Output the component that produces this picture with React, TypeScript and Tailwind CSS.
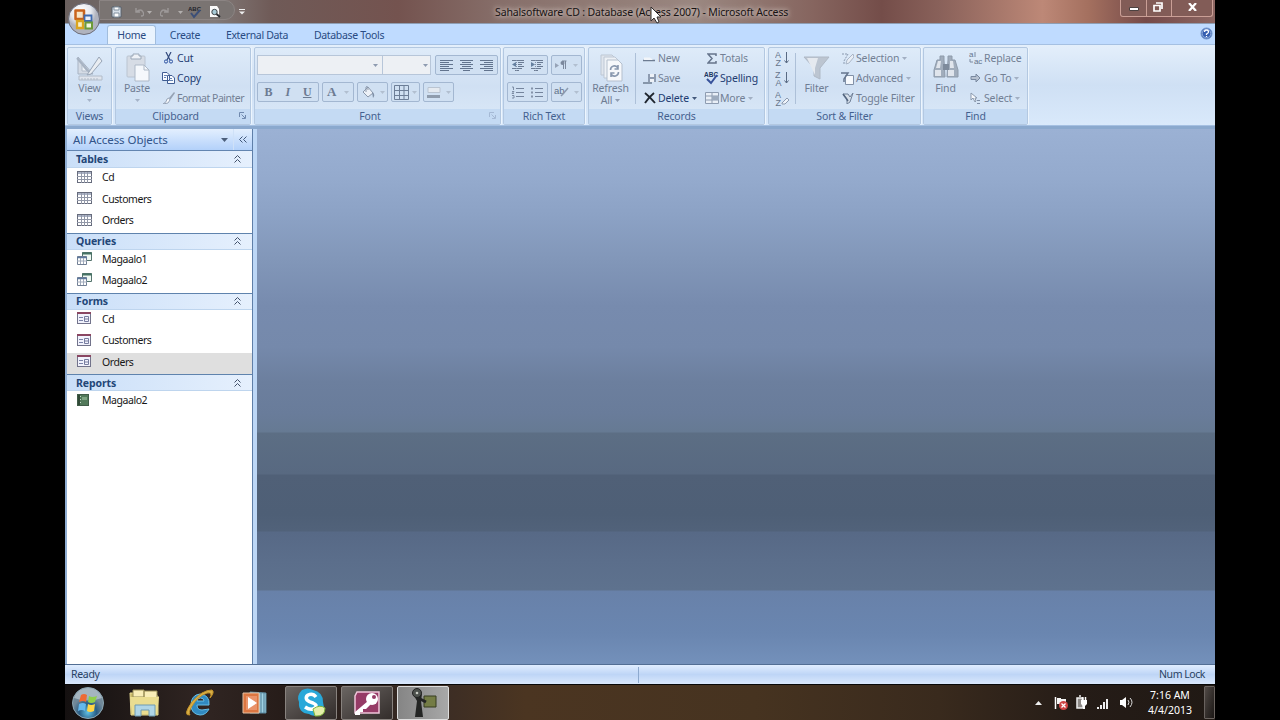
import type { ReactNode } from "react";

type Kids = { children?: ReactNode };

function Svg({ w, h, vb, cls = "", children }: Kids & { w: number; h: number; vb?: string; cls?: string }) {
  return (
    <svg width={w} height={h} viewBox={vb ?? `0 0 ${w} ${h}`} className={`shrink-0 ${cls}`} fill="none">
      {children}
    </svg>
  );
}

function Caret({ cls = "text-[#8e9bb0]" }: { cls?: string }) {
  return (
    <Svg w={5} h={3} cls={cls}>
      <path d="M0 0H5L2.5 3Z" fill="currentColor" />
    </Svg>
  );
}

function Group({ label, width, launcher, children }: Kids & { label: string; width: string; launcher?: string }) {
  return (
    <section className={`${width} flex h-[78px] shrink-0 flex-col rounded-[2px] border border-[#b3c8e1] bg-gradient-to-b from-[#deebf9] via-[#d0e0f3] to-[#dbe9f8] shadow-[1px_0_0_#edf5fd]`}>
      <div className="flex h-[61px] shrink-0">{children}</div>
      <div className="flex h-[15px] items-center bg-[#c4daf3] pb-[2px] text-[#44618f]">
        <span className="flex-1 text-center">{label}</span>
        {launcher && (
          <Svg w={7} h={7} cls={`mr-[4px] ml-[4px] ${launcher}`}>
            <path d="M.5 5V.5H5M2.5 2.5L6 6M6.5 3V6.5H3" stroke="currentColor" />
          </Svg>
        )}
      </div>
    </section>
  );
}

function Cmd({ icon, text, on, arrow, tight }: { icon: ReactNode; text: string; on?: boolean; arrow?: boolean; tight?: boolean }) {
  return (
    <div className={`flex h-5 items-center whitespace-nowrap ${on ? "text-[#1e3c72]" : "text-[#727f94]"}`}>
      <span className="flex w-[17px] shrink-0 justify-center">{icon}</span>
      <span className={`mr-[3px] ${tight ? "tracking-[-0.48px]" : ""}`}>{text}</span>
      {arrow && <Caret cls={on ? "text-[#44597c]" : "text-[#a2afc3]"} />}
    </div>
  );
}

function Big({ icon, width, lines, arrow }: { icon: ReactNode; width: string; lines: string[]; arrow?: boolean }) {
  return (
    <div className={`${width} flex flex-col items-center text-[#6f7d93]`}>
      <div className="flex h-[35px] shrink-0 items-center pt-1">{icon}</div>
      {lines.map((l, i) => (
        <span key={l} className="flex h-[11.5px] items-center gap-[3px] leading-[11px] whitespace-nowrap">
          {l}
          {arrow && i === 1 && <Caret />}
        </span>
      ))}
      {arrow && lines.length === 1 && <span className="mt-[4px]"><Caret cls="text-[#a5b3c8]" /></span>}
    </div>
  );
}

function Box({ width, children }: Kids & { width: string }) {
  return <div className={`${width} flex h-[20px] items-center justify-around rounded-[2px] border border-[#a3b7d1] bg-[#d0e0f2] text-[#6c7b92]`}>{children}</div>;
}

function Align({ kind }: { kind: "l" | "c" | "r" }) {
  const d = { l: "M0 1.5H13M0 3.5H9M0 5.5H13M0 7.5H9M0 9.5H13M0 11.5H9", c: "M0 1.5H13M2 3.5H11M0 5.5H13M2 7.5H11M0 9.5H13M3 11.5H10", r: "M0 1.5H13M4 3.5H13M0 5.5H13M4 7.5H13M0 9.5H13M4 11.5H13" }[kind];
  return <Svg w={13} h={13}><path d={d} stroke="#62748e" /></Svg>;
}

function Indent({ out }: { out?: boolean }) {
  return (
    <Svg w={14} h={12}>
      <path d="M1 1.5H13M7 3.5H13M7 5.5H11M7 7.5H13M1 9.5H11M4 11.5H8" stroke="#6b7b93" />
      <path d={out ? "M5 3L1 5.5L5 8Z" : "M1 3L5 5.5L1 8Z"} fill="#66809f" />
      <path d="M5.5 1V12" stroke="#8492a8" strokeDasharray="1 1" />
    </Svg>
  );
}

function List({ num }: { num?: boolean }) {
  return (
    <Svg w={14} h={13}>
      <path d="M5 2.5H13M5 6.5H13M5 10.5H13" stroke="#75849c" />
      {num ? <path d="M1 1H2.5V4M1 5.5H3L1 7.5H3M1 9.5H3V12H1" stroke="#75849c" strokeWidth=".9" /> : <path d="M1 1.5H3V3.5H1ZM1 5.5H3V7.5H1ZM1 9.5H3V11.5H1Z" fill="#8492a8" />}
    </Svg>
  );
}

function Sort({ a, b, erase }: { a: string; b: string; erase?: boolean }) {
  return (
    <Svg w={15} h={17}>
      <text x="0" y="8" fontSize="9" fill="#66758c" fontFamily="Liberation Sans, sans-serif">{a}</text>
      <text x="0.5" y="15.5" fontSize="9" fill="#66758c" fontFamily="Liberation Sans, sans-serif">{b}</text>
      {erase ? <path d="M7 13L12 8L14 10L10 14H7Z" fill="#eef3fa" stroke="#8d9bb0" /> : <path d="M11.5 2V13M9.5 10.5L11.5 13L13.5 10.5" stroke="#596a83" />}
    </Svg>
  );
}

function Ribbon() {
  return (
    <div className="flex h-[82px] shrink-0 gap-[3px] border-y border-[#a5c0e2] bg-gradient-to-b from-[#e4effb] via-[#cfe0f4] to-[#d9e9fb] pt-[2px] pl-[2px] tracking-[-0.15px]">
      <Group label="Views" width="w-[45px]">
        <Big width="w-full" lines={["View"]} arrow icon={
          <Svg w={28} h={27}>
            <path d="M2 3V20L17 20Z" fill="#d4dbe5" stroke="#a7b3c3" />
            <path d="M6 11V17H11Z" fill="#edf2f8" stroke="#b2bcc9" />
            <path d="M1 4L13 18" stroke="#a7b3c3" strokeWidth="2" />
            <path d="M13 18L11 21L15 20L26 7L23 3Z" fill="#e9edf2" stroke="#98a5b6" />
            <path d="M3 22H26V26H3Z" fill="#e0e5ed" stroke="#b2bcc9" />
            <path d="M6 24V26M9 24V26M12 24V26M15 24V26M18 24V26M21 24V26" stroke="#b2bcc9" />
          </Svg>
        } />
      </Group>
      <Group label="Clipboard" width="w-[136px]" launcher="text-[#7089ae]">
        <Big width="w-[42px]" lines={["Paste"]} arrow icon={
          <Svg w={25} h={29} cls="ml-[2px]">
            <rect x="1" y="3" width="18" height="21" rx="1" fill="#d6dce5" stroke="#bac4d1" />
            <path d="M5 3H7V1H13V3H15V6H5Z" fill="#eef2f7" stroke="#9ba8b8" />
            <path d="M9 12H18L23 17V28H9Z" fill="#f5f8fc" stroke="#aeb9c7" />
            <path d="M18 12V17H23" stroke="#aeb9c7" />
          </Svg>
        } />
        <div className="ml-[2px] w-[88px] shrink-0">
          <Cmd on text="Cut" icon={<Svg w={9} h={12}><path d="M2 0L6 8M7 0L3 8" stroke="#31497c" strokeWidth="1.2" /><circle cx="2" cy="9.5" r="1.6" stroke="#284f9f" /><circle cx="7" cy="9.5" r="1.6" stroke="#284f9f" /></Svg>} />
          <Cmd on text="Copy" icon={<Svg w={13} h={12}><path d="M.5.5H5L7.5 3V8.5H.5ZM5.5 3.5H10L12.5 6V11.5H5.5Z" fill="#f7faff" stroke="#405d93" /><path d="M2 3.5H5M2 5.5H4M7 6.5H10M7 8.5H11" stroke="#6382b1" /></Svg>} />
          <Cmd tight text="Format Painter" icon={<Svg w={12} h={12}><path d="M11 0L6 6L7.5 7.5L12 1Z" fill="#95a2b4" /><path d="M6 6L7 8L5 11L0 12Q4 10 4 7Z" fill="#f7f9fc" stroke="#98a5b8" /></Svg>} />
        </div>
      </Group>
      <Group label="Font" width="w-[247px]" launcher="text-[#a5b9d5]">
        <div className="flex flex-col gap-[7px] pt-[7px] pl-[2px]">
          <div className="flex h-5 items-center gap-[4px]">
            <div className="flex h-5 border border-[#b7c6d9] bg-[#edf0f4]">
              <div className="flex w-[125px] items-center justify-end border-r border-[#b7c6d9] pr-[4px]"><Caret /></div>
              <div className="flex w-[47px] items-center justify-end pr-[2px]"><Caret /></div>
            </div>
            <Box width="w-[63px]"><Align kind="l" /><Align kind="c" /><Align kind="r" /></Box>
          </div>
          <div className="flex gap-[3px] font-['Liberation_Serif',serif] text-[12px]">
            <Box width="w-[62px]"><b>B</b><i className="font-bold">I</i><b className="underline">U</b></Box>
            <Box width="w-[32px]"><b className="text-[13px]">A</b><Caret cls="text-[#b2bfd0]" /></Box>
            <Box width="w-[31px]"><Svg w={14} h={13}><path d="M2 6L7 1L12 7L7 11Z" fill="#edf1f7" stroke="#8b98ab" /><path d="M5 6V1Q7-1 7 4" stroke="#8b98ab" /><path d="M11 6Q15 8 12 12Z" fill="#8090a7" /></Svg><Caret cls="text-[#b2bfd0]" /></Box>
            <Box width="w-[29px]"><Svg w={15} h={15}><path d="M.5.5H14.5V14.5H.5ZM5.5 0V15M10 0V15M0 5.5H15M0 10.5H15" stroke="#6d7e97" /></Svg><Caret cls="text-[#b2bfd0]" /></Box>
            <Box width="w-[31px]"><Svg w={15} h={13}><path d="M2 1.5H14V6.5H2Z" fill="#e5eaf0" stroke="#bac4d1" /><path d="M1 10.500H14" stroke="#8f9cad" strokeWidth="3" /></Svg><Caret cls="text-[#b2bfd0]" /></Box>
          </div>
        </div>
      </Group>
      <Group label="Rich Text" width="w-[82px] -ml-[1px]">
        <div className="flex flex-col gap-[7px] pt-[7px] pl-[3px]">
          <div className="flex gap-[3px]">
            <Box width="w-[41px]"><Indent out /><Indent /></Box>
            <Box width="w-[31px]"><Svg w={13} h={10}><path d="M0 3L4 5.5L0 8Z" fill="#96a3b7" /><path d="M8.5 9V1M10.500 9V1M11.500 1H7" stroke="#7b889d" /><circle cx="7.5" cy="3" r="2" fill="#7b889d" /></Svg><Caret cls="text-[#b2bfd0]" /></Box>
          </div>
          <div className="flex gap-[3px]">
            <Box width="w-[41px]"><List num /><List /></Box>
            <Box width="w-[31px]"><Svg w={16} h={14}><text x="0" y="9" fontSize="9.5" fill="#5f7089" fontFamily="Liberation Sans, sans-serif">ab</text><path d="M14 3L9 9L7 11" stroke="#8c9aaf" strokeWidth="1.5" /></Svg><Caret cls="text-[#b2bfd0]" /></Box>
          </div>
        </div>
      </Group>
      <Group label="Records" width="w-[177px]">
        <Big width="w-[43px]" lines={["Refresh", "All"]} arrow icon={
          <Svg w={24} h={28} cls="ml-[3px]">
            <path d="M1 1H12L16 5V21H1Z" fill="#dfe5ed" stroke="#bdc7d4" />
            <path d="M4 3H15L19 7V24H4Z" fill="#edf1f6" stroke="#bdc7d4" />
            <path d="M7 6H18L22 10V27H7Z" fill="#f6f8fb" stroke="#b4bfcd" />
            <path d="M10.5 16A4 4 0 0 1 18 14M18.5 18A4 4 0 0 1 11 20M18 11V15H14.5M11 23V19H14.5" stroke="#8998af" strokeWidth="1.6" />
          </Svg>
        } />
        <div className="my-[5px] ml-[3px] w-px bg-[#adc0d8]" />
        <div className="ml-[5px] w-[62px]">
          <Cmd text="New" icon={<Svg w={13} h={8}><path d="M0 6.5H12" stroke="#6d7c92" strokeWidth="1.5" /><path d="M1 3.5H7L10 6H1Z" fill="#f2f5f9" /></Svg>} />
          <Cmd text="Save" icon={<Svg w={14} h={11}><path d="M5 1H13V9H5Z" fill="#8e9cb1" /><path d="M7 1H11V4H7ZM7 6H11V9H7Z" fill="#edf1f7" /><path d="M0 10H9" stroke="#6d7c92" strokeWidth="1.5" /></Svg>} />
          <Cmd on text="Delete" arrow icon={<Svg w={12} h={12}><path d="M1 1Q6 5 11 11M10 1Q5 5 1 11" stroke="#20262f" strokeWidth="1.9" /></Svg>} />
        </div>
        <div>
          <Cmd text="Totals" icon={<Svg w={10} h={11}><path d="M9 3V1H1L5 5.5L1 10H9V8" stroke="#65748b" strokeWidth="1.5" /></Svg>} />
          <Cmd on text="Spelling" icon={<Svg w={15} h={14}><text x="0" y="6" fontSize="6.5" fontWeight="700" fill="#20355f" fontFamily="Liberation Sans, sans-serif" textLength="14">ABC</text><path d="M3 8L7 12L13 4" stroke="#37529a" strokeWidth="2" /></Svg>} />
          <Cmd text="More" arrow icon={<Svg w={14} h={12}><path d="M.5.5H13.5V11.5H.5ZM0 4H14M0 8H14M7 0V12" fill="#e9eff7" stroke="#8e9cb1" /><path d="M7 4H14V8H7Z" fill="#9dabbe" /></Svg>} />
        </div>
      </Group>
      <Group label="Sort & Filter" width="w-[153px]">
        <div className="flex w-[26px] flex-col items-center gap-[3px] pt-[2px]">
          <Sort a="A" b="Z" /><Sort a="Z" b="A" /><Sort a="A" b="Z" erase />
        </div>
        <div className="my-[5px] w-px bg-[#adc0d8]" />
        <Big width="w-[41px]" lines={["Filter"]} icon={
          <Svg w={27} h={26}>
            <path d="M1 2H26L17 13V24L11 21V13Z" fill="#bcc5d1" stroke="#afb9c6" />
            <path d="M4 3H15L12 13V20Z" fill="#e5e9ef" />
          </Svg>
        } />
        <div className="ml-[2px]">
          <Cmd text="Selection" arrow icon={<Svg w={13} h={13}><path d="M1 2H7L3 9V12" stroke="#8998ae" strokeDasharray="2 1" /><path d="M12 2L6 8L5 12L8 11L13 5Z" fill="#e9eef5" stroke="#aab6c7" /></Svg>} />
          <Cmd text="Advanced" arrow icon={<Svg w={13} h={13}><path d="M4.5 3.5H12.5V12.5H4.5Z" fill="#f6f9fd" stroke="#8190a7" /><path d="M0 1H7L3 7V10" stroke="#66768e" strokeWidth="1.5" /></Svg>} />
          <Cmd text="Toggle Filter" icon={<Svg w={12} h={12}><path d="M1 2H6L8 5L11 1L8 10L5 12V7Z" fill="#d5dee9" stroke="#718198" /><path d="M1 2L6 9" stroke="#53657f" strokeWidth="1.5" /></Svg>} />
        </div>
      </Group>
      <Group label="Find" width="w-[105px] -ml-[1px]">
        <Big width="w-[43px]" lines={["Find"]} icon={
          <Svg w={26} h={25}>
            <path d="M4 5H7V1H11V5L12 22H1V15Z" fill="#a1adbc" stroke="#8e9bab" />
            <path d="M15 5V1H19V5H22L25 15V22H14Z" fill="#a1adbc" stroke="#8e9bab" />
            <path d="M10 9H16V15H10Z" fill="#7e8b9c" />
            <path d="M2 15H8V21H2ZM15 15H21V21H15ZM5 6H8L7 13H3ZM17 6H20L21 13H17Z" fill="#e0e5ec" />
          </Svg>
        } />
        <div>
          <Cmd text="Replace" icon={<Svg w={14} h={14}><text x="0" y="6" fontSize="8" fill="#65748b" fontFamily="Liberation Sans, sans-serif">a</text><text x="5" y="13" fontSize="8" fill="#65748b" fontFamily="Liberation Sans, sans-serif">ac</text><path d="M6 1V6M1 8V11H4" stroke="#7c8aa0" /></Svg>} />
          <Cmd text="Go To" arrow icon={<Svg w={11} h={8}><path d="M1 2.5H6V0L10 4L6 8V5.5H1Z" fill="#b6c1d0" stroke="#78889f" /></Svg>} />
          <Cmd text="Select" arrow icon={<Svg w={11} h={12}><path d="M1 1V8L3 6L5 10L6 9L5 6H7Z" fill="#f7f9fc" stroke="#8b99ad" /><path d="M7 8.5H10M7 11.5H10" stroke="#7f8fa7" /></Svg>} />
        </div>
      </Group>
    </div>
  );
}

type Kind = "table" | "query" | "form" | "report";
const nav: { title: string; kind: Kind; items: string[] }[] = [
  { title: "Tables", kind: "table", items: ["Cd", "Customers", "Orders"] },
  { title: "Queries", kind: "query", items: ["Magaalo1", "Magaalo2"] },
  { title: "Forms", kind: "form", items: ["Cd", "Customers", "Orders"] },
  { title: "Reports", kind: "report", items: ["Magaalo2"] },
];

function ObjIcon({ kind }: { kind: Kind }) {
  if (kind === "table") return <Svg w={15} h={12}><rect x=".5" y=".5" width="14" height="11" fill="#fff" stroke="#676c7d" /><path d="M1 2H14" stroke="#aab2c5" strokeWidth="2" /><path d="M0 5.5H15M0 8.5H15M4.5 1V12M7.5 1V12M10.5 1V12" stroke="#9298a8" /></Svg>;
  if (kind === "query") return <Svg w={15} h={13}><path d="M5.5.5H14.5V8.5H5.5Z" fill="#eef7f2" stroke="#54736d" /><path d="M5 1.5H15" stroke="#467365" strokeWidth="2" /><path d="M.5 4.5H9.5V12.5H.5Z" fill="#fff" stroke="#717f94" /><path d="M0 5.5H10" stroke="#5f799d" strokeWidth="1.5" /><path d="M3.5 6V12M6.5 6V12M0 9H10" stroke="#a1abbc" /></Svg>;
  if (kind === "form") return <Svg w={14} h={12}><rect x=".5" y=".5" width="13" height="11" fill="#f1f2fc" stroke="#72738b" /><path d="M0 1H14" stroke="#8a4662" strokeWidth="2" /><path d="M2 5.5H6M2 8.5H6" stroke="#7b83a9" /><path d="M7.5 4.5H11.5V9.5H7.5ZM7 7H12" stroke="#777d9f" /></Svg>;
  return <Svg w={12} h={12}><rect x=".5" y=".5" width="11" height="11" fill="#52795a" stroke="#405c48" /><path d="M2 1V11" stroke="#304936" strokeWidth="2" /><path d="M5 3H10V6H5Z" fill="#7ea483" /><path d="M3 2.5H4M3 5.5H4M3 8.5H4" stroke="#c3d8c4" /></Svg>;
}

function Navigation() {
  return (
    <aside className="flex w-[188px] shrink-0 flex-col border-r border-l-2 border-r-[#5f7fa8] border-l-[#8fadd2] bg-white">
      <div className="flex h-[22px] items-center border-b border-[#6385b0] bg-gradient-to-b from-[#e3effe] to-[#b3d1fa] pl-[6px] text-[11.5px] tracking-[-0.06px] text-[#31548a]">
        <span className="flex-1">All Access Objects</span>
        <Svg w={7} h={4} cls="mr-[5px]"><path d="M0 0H7L3.5 4Z" fill="#4c5f7b" /></Svg>
        <div className="flex h-full w-[19px] items-center justify-center border-l border-[#cfe1f8]">
          <Svg w={8} h={7}><path d="M3.5.5L.5 3.5L3.5 6.5M7.5.5L4.5 3.5L7.5 6.5" stroke="#405779" /></Svg>
        </div>
      </div>
      {nav.map((g, gi) => (
        <section key={g.title}>
          <div className={`flex h-[17px] items-center justify-between border-b border-b-[#bed5ee] bg-gradient-to-r from-[#cadff8] to-[#e6f0fd] pr-[11px] pl-[9px] text-[10.5px] font-bold tracking-[-0.1px] text-[#234677] ${gi ? "border-t border-t-[#5f83ad]" : ""}`}>
            {g.title}
            <Svg w={7} h={8}><path d="M.5 3.5L3.5.5L6.5 3.5M.5 7.5L3.5 4.5L6.5 7.5" stroke="#42516a" /></Svg>
          </div>
          {g.items.map((t, i) => (
            <div key={t} className={`flex h-[21.5px] items-center pb-[3px] text-[10.5px] tracking-[-0.45px] text-[#171717] ${g.kind === "form" && i === 2 ? "bg-[#dfdfdf]" : ""}`}>
              <span className="ml-[10px] flex w-[25px] pb-[1px]"><ObjIcon kind={g.kind} /></span>
              {t}
            </div>
          ))}
        </section>
      ))}
    </aside>
  );
}

function OfficeOrb() {
  return (
    <Svg w={34} h={34} cls="absolute top-[2px] left-[2px] z-10">
      <defs><radialGradient id="orb" cx=".4" cy=".25"><stop stopColor="#fff" /><stop offset=".65" stopColor="#e8eaef" /><stop offset="1" stopColor="#b0b3be" /></radialGradient></defs>
      <circle cx="17" cy="17" r="15.5" fill="url(#orb)" stroke="#6d6e7b" />
      <path d="M8.5 8.5H17V17H8.5Z" fill="#f8e5c6" stroke="#c9641d" strokeWidth="2.5" strokeLinejoin="round" />
      <path d="M17.500 13.500H24.500V19H17.500Z" fill="#e9eff9" stroke="#3f6bb0" strokeWidth="1.800" />
      <path d="M10 19H16V26H10Z" fill="#faf0c6" stroke="#dba51f" strokeWidth="2.300" />
      <path d="M18.500 20.500H25V26.500H18.500Z" fill="#eff6df" stroke="#6c9b38" strokeWidth="2" />
    </Svg>
  );
}

function TitleBar() {
  return (
    <header className="relative flex h-[23px] shrink-0 items-start bg-[linear-gradient(90deg,#6a605e_0%,#817977_13%,#6f5a57_18%,#74534f_29%,#876f6a_38%,#9a8780_55%,#86655f_65%,#744d49_71%,#89615a_76%,#bd8877_85%,#a4705f_89%,#754a49_94%,#8c6662_100%)]">
      <OfficeOrb />
      <div className="ml-[34px] flex h-[20px] w-[136px] items-center rounded-r-[10px] border border-[#8b8483] bg-[#7a7472] pt-[4px] pl-[11px]">
        <Svg w={11} h={12}><path d="M1 1H10V11H1Z" fill="#d7e0e9" stroke="#56616c" /><path d="M3 1H8V4H3ZM3 7H8V11H3Z" fill="#fff" stroke="#81909e" /></Svg>
        <Svg w={10} h={9} cls="ml-[12px]"><path d="M2 4Q7 0 9 4T7 8M2 0V4H6" stroke="#9d9999" strokeWidth="1.4" /></Svg>
        <span className="ml-[3px]"><Caret cls="text-[#b2afae]" /></span>
        <Svg w={10} h={9} cls="ml-[8px]"><path d="M8 4Q3 0 1 4T3 8M8 0V4H4" stroke="#9d9999" strokeWidth="1.4" /></Svg>
        <span className="ml-[8px]"><Caret cls="text-[#b2afae]" /></span>
        <Svg w={14} h={13} cls="ml-[5px]"><text x="0" y="5" fontSize="6" fontWeight="700" fill="#20232b" fontFamily="Liberation Sans, sans-serif" textLength="13">ABC</text><path d="M3 7L6 11L12 4" stroke="#3c4f78" strokeWidth="2" /></Svg>
        <Svg w={12} h={12} cls="ml-[7px]"><path d="M1 0H8L10 3V11H1Z" fill="#fafafa" /><circle cx="5.5" cy="6" r="2.7" fill="#a7cad6" stroke="#41474c" /><path d="M7.5 8L11 11" stroke="#292d31" strokeWidth="2" /></Svg>
      </div>
      <Svg w={6} h={6} cls="mt-[9px] ml-[4px]"><path d="M0 .5H6" stroke="#eee" /><path d="M0 2.5H6L3 5.5Z" fill="#eee" /></Svg>
      <h1 className="absolute top-[4px] left-[430px] h-[16px] text-[10.5px] leading-[16px] tracking-[-0.13px] whitespace-nowrap text-[#181313] [text-shadow:0_0_4px_#d5c8c3,0_0_6px_#d5c8c3]">Sahalsoftware CD : Database (Access 2007) - Microsoft Access</h1>
      <Svg w={12} h={18} cls="absolute top-[6px] left-[585px]"><path d="M1 1V15L4 12L7 17L9 16L7 11H11Z" fill="#fff" stroke="#302c2c" /></Svg>
      <div className="mr-[2px] ml-auto flex h-[17px] w-[93px] rounded-b-[3px] border border-t-0 border-[#ca9f96] bg-[#825c57] pb-[2px]">
        <div className="-mb-[2px] flex w-[26px] items-center justify-center border-r border-[#ca9f96]"><Svg w={10} h={4} cls="mt-[2px]"><path d="M.5.5H9.5V3.5H.5Z" fill="#fff" stroke="#4c4140" /></Svg></div>
        <div className="-mb-[2px] flex w-[25px] items-center justify-center border-r border-[#ca9f96] pr-[3px] pb-[3px]"><Svg w={10} h={10}><path d="M3 1H9V7M1 3.5H7V9H1Z" stroke="#fff" strokeWidth="1.7" /></Svg></div>
        <div className="flex flex-1 items-center justify-center"><Svg w={9} h={8}><path d="M1 0L8 8M8 0L1 8" stroke="#fff" strokeWidth="2.2" /></Svg></div>
      </div>
    </header>
  );
}

function TaskButton({ active, children }: Kids & { active?: boolean }) {
  return <div className={`flex h-[34px] w-[52px] items-center justify-center rounded-[2px] border ${active ? "border-[#dedede] bg-gradient-to-r from-[#858585] to-[#a8a8a8]" : "border-[#88827e] bg-gradient-to-br from-[#6a6562] to-[#332d2b]"}`}>{children}</div>;
}

function TaskBar() {
  return (
    <footer className="flex h-[36px] shrink-0 items-center border-t border-[#080808] bg-[linear-gradient(90deg,#141010_0%,#302522_12%,#251b18_20%,#3a2c25_32%,#4b3521_40%,#463320_60%,#392a1d_76%,#251c17_88%,#201914_100%)]">
      <Svg w={34} h={34} cls="ml-[6px]">
        <defs><radialGradient id="start" cx=".5" cy=".8"><stop stopColor="#62c3e6" /><stop offset=".55" stopColor="#295e86" /><stop offset="1" stopColor="#718898" /></radialGradient></defs>
        <circle cx="17" cy="17" r="15.5" fill="url(#start)" stroke="#8ba5b1" />
        <path d="M3 12Q7 2 17 2T31 12Q17 17 3 12Z" fill="#e4edf2" opacity=".45" />
        <path d="M10 9Q13 7 16 9L15 16Q12 14 8 16Z" fill="#ee6a35" /><path d="M18 10Q21 12 26 10L24 16Q20 18 17 16Z" fill="#8fcf4a" /><path d="M8 18Q12 16 15 18L14 25Q11 23 7 25Z" fill="#64b9ee" /><path d="M17 18Q20 20 24 18L23 25Q19 27 16 25Z" fill="#ffd545" />
      </Svg>
      <Svg w={31} h={29} cls="ml-[24px]"><path d="M1 5H10L12 8H29V27H2Z" fill="#c9b966" stroke="#e9dc93" /><path d="M4 2H15V9H4ZM15 3H28V10H15Z" fill="#f8edb7" stroke="#978c55" /><path d="M1 9H30L28 26H3Z" fill="#eadd90" /><path d="M6 28V17H26V28H20V22H12V28Z" fill="#afd5e6" stroke="#6e9bb2" /></Svg>
      <Svg w={30} h={30} cls="ml-[25px]"><path fillRule="evenodd" d="M24 17H12Q12 22 17 22L24 21Q21 27 15 27Q6 26 6 17Q6 7 15 6Q25 7 24 17ZM12 13H19Q19 10 15.5 10T12 13Z" fill="#318ac1" stroke="#67bde5" /><path d="M5 27Q-3 28 7 14Q17 2 27 2Q30 4 25 10Q28 4 22 5Q13 8 7 18Q3 25 5 27Z" fill="#d9b046" stroke="#c39128" /></Svg>
      <Svg w={26} h={25} cls="ml-[27px]"><path d="M8 2L24 3V23H8Z" fill="#9fd0e1" stroke="#5b8ba2" /><path d="M19 3V23M22 3V23" stroke="#4e7d94" /><path d="M1 3H17V23H1Z" fill="#dc7641" stroke="#e4c0a2" /><path d="M4 6H15V20H4Z" fill="#e9936a" /><path d="M6 7L15 13L6 19Z" fill="#fff" /></Svg>
      <div className="ml-[17px] flex gap-[4px]">
        <TaskButton><Svg w={32} h={31}><path d="M7 3Q13 0 18 3Q28 5 28 15Q31 25 23 28Q18 30 14 27Q3 26 4 15Q1 9 7 3Z" fill="#29a8d9" /><path d="M21 10Q18 6 13 8Q10 10 12 13Q14 15 18 16Q23 18 20 21Q16 24 10 20" stroke="#fff" strokeWidth="3.5" /><path d="M18 22Q25 17 30 21Q30 30 20 29Z" fill="#e5efaa" stroke="#7fb43b" /></Svg></TaskButton>
        <TaskButton><Svg w={28} h={28}><path d="M4 3H26V24H2V7Z" fill="#963b66" stroke="#efc5d9" strokeWidth="1.5" /><circle cx="19" cy="10" r="6" fill="#fff" /><circle cx="21" cy="8" r="2" fill="#963b66" /><path d="M15 12L2 23V26H7V23H10V20H13L18 15Z" fill="#fff" /></Svg></TaskButton>
        <TaskButton active><Svg w={28} h={32}><path d="M15 9H27V20H15Z" fill="#747c45" stroke="#373c20" /><path d="M4 7H13L12 14L14 30H6L8 14Z" fill="#242524" /><circle cx="8" cy="6" r="4.500" fill="#4c504c" stroke="#222" /><circle cx="8" cy="6" r="1.300" fill="#c8cbc3" /><path d="M11 12L17 15" stroke="#242424" strokeWidth="3" /></Svg></TaskButton>
      </div>
      <div className="ml-auto flex items-center">
        <Svg w={7} h={4}><path d="M3.5 0L7 4H0Z" fill="#eee" /></Svg>
        <Svg w={15} h={14} cls="ml-[12px]"><path d="M1.5 1V13" stroke="#fff" strokeWidth="1.5" /><path d="M3 2H7V3H12V9H7V8H3Z" fill="#f5f5f5" /><circle cx="9.5" cy="9.5" r="4.5" fill="#ce4545" /><path d="M7.5 7.5L11.5 11.5M11.5 7.5L7.5 11.5" stroke="#fff" strokeWidth="1.3" /></Svg>
        <Svg w={13} h={15} cls="ml-[6px]"><path d="M2 3H8V13H2ZM4 1H6" fill="#8f8b88" stroke="#eee" strokeWidth="1.500" /><path d="M6 5H12V9L10 11V14H8V11L6 9Z" fill="#fff" /><path d="M7.5 2V6M10.5 2V6" stroke="#fff" strokeWidth="1.5" /></Svg>
        <Svg w={12} h={12} cls="ml-[9px]"><path d="M0 10H2V12H0ZM3 8H5V12H3ZM6 5H8V12H6ZM9 2H11V12H9Z" fill="#eee" /></Svg>
        <Svg w={14} h={13} cls="ml-[10px]"><path d="M1 4H3L7 1V12L3 9H1Z" fill="#fff" /><path d="M9 4Q11 6 9 9M11 2Q15 6 11 11" stroke="#ddd" /></Svg>
        <div className="ml-[11px] w-[52px] text-center text-[10.5px] leading-[15px] whitespace-nowrap text-white"><div>7:16 AM</div><div>4/4/2013</div></div>
        <div className="ml-[8px] h-[33px] w-[11px] rounded-[1px] border border-[#69625e] bg-gradient-to-br from-[#514a46] to-[#1b1715]" />
      </div>
    </footer>
  );
}

export default function App() {
  return (
    <main className="flex h-[720px] w-[1280px] justify-center overflow-hidden bg-black font-['Noto_Sans','Open_Sans',sans-serif] text-[10.5px] leading-[14px] select-none">
      <div className="flex w-[1150px] flex-col bg-[#bfdbff]">
        <TitleBar />
        <div className="flex h-[21px] shrink-0 items-end border-t border-[#8e9eb3] bg-[#bfdbff] text-[10.5px] tracking-[-0.33px] text-[#294b83]">
          <div className="ml-[42px] flex h-[19px] w-[49px] items-center justify-center rounded-t-[3px] border border-b-0 border-[#a1bddd] bg-[#e9f3fe]">Home</div>
          <div className="flex h-[19px] w-[58px] items-center justify-center">Create</div>
          <div className="flex h-[19px] w-[86px] items-center justify-center">External Data</div>
          <div className="ml-[4px] flex h-[19px] w-[90px] items-center justify-center">Database Tools</div>
          <Svg w={13} h={13} cls="mr-[2px] mb-[4px] ml-auto"><circle cx="6.5" cy="6.5" r="5.5" fill="#345eb0" stroke="#7194ca" /><circle cx="6.5" cy="6.5" r="4.3" stroke="#c8daf4" strokeWidth=".6" /><path d="M4.5 5Q4.5 3 6.5 3T8.5 5Q8.5 6 6.5 7V8M6.5 9V10" stroke="#fff" strokeWidth="1.3" /></Svg>
        </div>
        <Ribbon />
        <div className="h-[3px] shrink-0 bg-[#8ba9ce]" />
        <div className="flex min-h-0 flex-1">
          <Navigation />
          <div className="w-[4px] bg-[#bdd7f6]" />
          <div className="flex-1 bg-[linear-gradient(180deg,#9bb1d4_0px,#94aacd_50px,#8ca2c5_86px,#8297b9_130px,#778bae_177px,#7589ab_218px,#6c7f9e_253px,#697c9a_285px,#667a93_303px,#5c6e84_304px,#586981_345px,#506077_346px,#4e5f76_385px,#51627a_402px,#576986_403px,#5b6e8b_432px,#5e728e_461px,#6881a9_462px,#6a86b0_505px,#7491bb_536px)]" />
        </div>
        <div className="flex h-[20px] shrink-0 items-center border-t border-[#526e94] bg-gradient-to-b from-[#e0edff] via-[#bed5f6] to-[#dae8fc] text-[10.5px] tracking-[-0.45px] text-[#294263]">
          <span className="w-[573px] pb-[1px] pl-[6px] tracking-[-0.3px]">Ready</span>
          <span className="h-[16px] w-px bg-[#8da9ce]" />
          <span className="ml-auto pr-[10px] pb-[1px]">Num Lock</span>
        </div>
        <TaskBar />
      </div>
    </main>
  );
}
